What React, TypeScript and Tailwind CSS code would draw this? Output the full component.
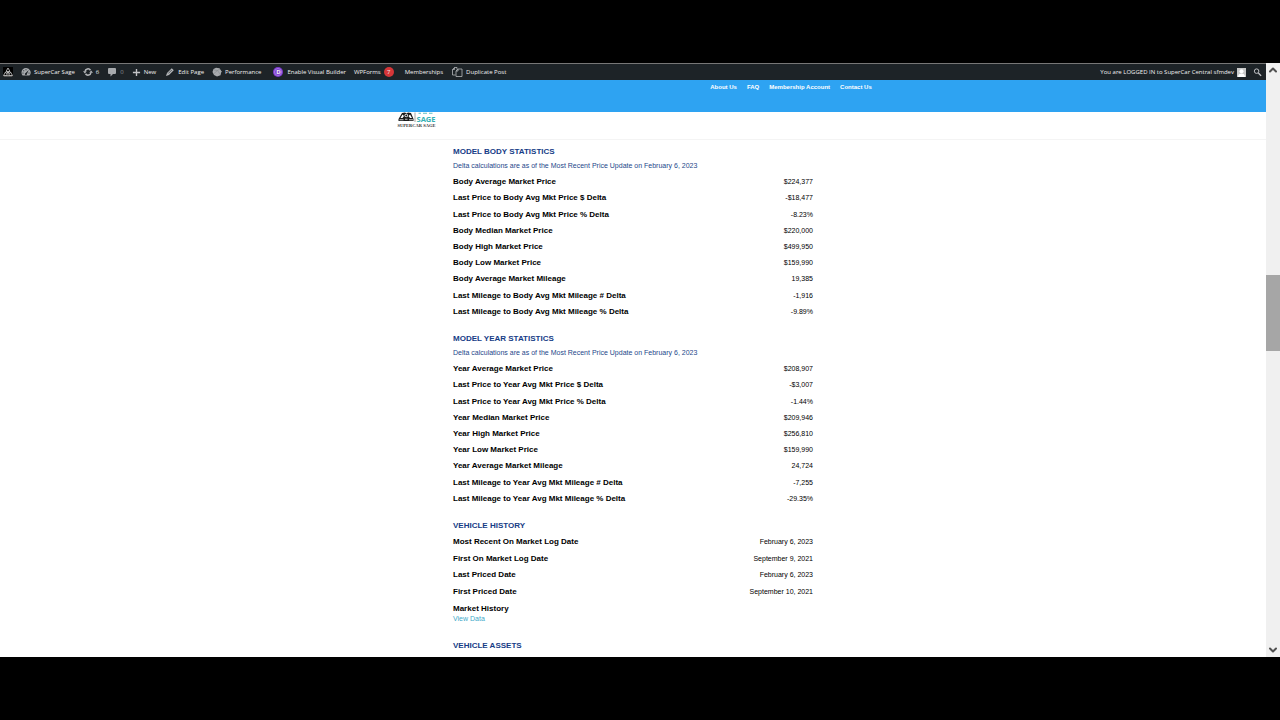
import type { ReactNode } from 'react';
import { ChevronDown, ChevronUp } from 'lucide-react';

interface Row { label: string; value: string }
interface SectionProps { title: string; note?: string; rows: Row[]; height: string }

const bodyRows: Row[] = [
  { label: 'Body Average Market Price', value: '$224,377' },
  { label: 'Last Price to Body Avg Mkt Price $ Delta', value: '-$18,477' },
  { label: 'Last Price to Body Avg Mkt Price % Delta', value: '-8.23%' },
  { label: 'Body Median Market Price', value: '$220,000' },
  { label: 'Body High Market Price', value: '$499,950' },
  { label: 'Body Low Market Price', value: '$159,990' },
  { label: 'Body Average Market Mileage', value: '19,385' },
  { label: 'Last Mileage to Body Avg Mkt Mileage # Delta', value: '-1,916' },
  { label: 'Last Mileage to Body Avg Mkt Mileage % Delta', value: '-9.89%' },
];

const yearRows: Row[] = [
  { label: 'Year Average Market Price', value: '$208,907' },
  { label: 'Last Price to Year Avg Mkt Price $ Delta', value: '-$3,007' },
  { label: 'Last Price to Year Avg Mkt Price % Delta', value: '-1.44%' },
  { label: 'Year Median Market Price', value: '$209,946' },
  { label: 'Year High Market Price', value: '$256,810' },
  { label: 'Year Low Market Price', value: '$159,990' },
  { label: 'Year Average Market Mileage', value: '24,724' },
  { label: 'Last Mileage to Year Avg Mkt Mileage # Delta', value: '-7,255' },
  { label: 'Last Mileage to Year Avg Mkt Mileage % Delta', value: '-29.35%' },
];

const historyRows: Row[] = [
  { label: 'Most Recent On Market Log Date', value: 'February 6, 2023' },
  { label: 'First On Market Log Date', value: 'September 9, 2021' },
  { label: 'Last Priced Date', value: 'February 6, 2023' },
  { label: 'First Priced Date', value: 'September 10, 2021' },
];

const note = 'Delta calculations are as of the Most Recent Price Update on February 6, 2023';

function AdminLink({ icon, children }: { icon?: ReactNode; children?: ReactNode }) {
  return <a href="#" className="flex items-center gap-[3px] whitespace-nowrap">{icon}{children}</a>;
}

function SiteIcon() {
  return <svg viewBox="0 0 20 20" className="size-[10px]">
    <rect width="20" height="20" fill="#000" />
    <path d="M10 2 6 9h8zM5 10l-4 7h8zM15 10l-4 7h8z" fill="none" stroke="#ddd" strokeWidth="1.5" />
    <path d="M7 10h6l-3 5z" fill="#bbb" />
    <path d="M1 18.5h18" stroke="#ddd" />
  </svg>;
}

function DashboardIcon() {
  return <svg viewBox="0 0 20 20" className="size-[10px]">
    <path fill="#a7aaad" d="M10 2a9 9 0 0 0-9 9c0 2.400.8 4.500 2.200 6.200h13.600A9 9 0 0 0 10 2z" />
    <g fill="#1d2327"><circle cx="10" cy="5.500" r="1.200" /><circle cx="5.500" cy="7.500" r="1.200" /><circle cx="4" cy="12" r="1.200" /><circle cx="16" cy="12" r="1.200" /><path d="m15.500 6-3.500 7.500a2.200 2.200 0 1 1-2.800-1.500z" /></g>
  </svg>;
}

function UpdatesIcon() {
  return <svg viewBox="0 0 20 20" className="size-[10px]">
    <path d="M4 9a6 6 0 0 1 11-2.500M16 11a6 6 0 0 1-11 2.500" fill="none" stroke="#b4b6b9" strokeWidth="3" />
    <path d="M0 8.500h7.500L3.700 13zM20 11.500h-7.500L16.300 7z" fill="#b4b6b9" />
  </svg>;
}

function CommentIcon() {
  return <svg viewBox="0 0 20 20" className="size-[10px]"><path fill="#a7aaad" d="M4 2h12a2 2 0 0 1 2 2v8a2 2 0 0 1-2 2h-4l-5 5v-5H4a2 2 0 0 1-2-2V4a2 2 0 0 1 2-2z" /></svg>;
}

function PlusIcon() {
  return <svg viewBox="0 0 20 20" className="size-[9px]"><path fill="#c3c4c7" d="M8.500 2h3v6.500H18v3h-6.500V18h-3v-6.500H2v-3h6.500z" /></svg>;
}

function EditIcon() {
  return <svg viewBox="0 0 20 20" className="size-[10px]">
    <path fill="#b4b6b9" d="m13.500 2.500 4 4-9.500 9.500-6 2 2-6z" />
    <path d="m6.500 13 7-7" stroke="#1d2327" strokeWidth="1.200" />
  </svg>;
}

function PerformanceIcon() {
  return <svg viewBox="0 0 20 20" className="size-[10px]">
    <path fill="#a7aaad" d="M8 1.500 15 2.500l4 6-2 8-7 2.500-6-3-3-6 2-6z" />
    <path d="m4 6 7 1 5-3M4 13l7-6 5 7" fill="none" stroke="#85898d" strokeWidth="1.200" />
  </svg>;
}

function DuplicateIcon() {
  return <svg viewBox="0 0 22 20" className="h-[10px] w-[11px]" fill="none" stroke="#b4b6b9" strokeWidth="1.600">
    <path d="M10 5V1H5L1 5v11h6M5 1v4H1" />
    <path d="M12 4h8v15H8V8zM12 4v4H8" />
  </svg>;
}

function SearchIcon() {
  return <svg viewBox="0 0 20 20" className="size-[9px]" fill="none" stroke="#c3c4c7">
    <circle cx="8" cy="7" r="5" strokeWidth="2.200" /><path d="m12 11 6 6.500" strokeWidth="3" />
  </svg>;
}

function BuilderIcon() {
  return <span className="mr-px flex size-[10px] items-center justify-center rounded-full bg-[#7e3bd0]">
    <span className="flex size-[8px] items-center justify-center rounded-full border border-[#a77be3] font-bold">D</span>
  </span>;
}

function AdminBar() {
  return <nav aria-label="Toolbar" className="flex h-[17px] shrink-0 items-center justify-between border-t border-[#777] bg-[#1d2327] pr-1 pl-[3px] font-['Open_Sans',sans-serif] text-[6px] leading-[10px] text-[#f0f0f1]">
    <div className="flex items-center">
      <a href="#" aria-label="Home"><SiteIcon /></a>
      <div className="ml-2"><AdminLink icon={<DashboardIcon />}>SuperCar Sage</AdminLink></div>
      <div className="ml-2"><AdminLink icon={<UpdatesIcon />}>6</AdminLink></div>
      <div className="ml-2 text-[#8c8f94]"><AdminLink icon={<CommentIcon />}>0</AdminLink></div>
      <div className="ml-2"><AdminLink icon={<PlusIcon />}>New</AdminLink></div>
      <div className="ml-[9px]"><AdminLink icon={<EditIcon />}>Edit Page</AdminLink></div>
      <div className="ml-2"><AdminLink icon={<PerformanceIcon />}>Performance</AdminLink></div>
      <div className="ml-3"><AdminLink icon={<BuilderIcon />}>Enable Visual Builder</AdminLink></div>
      <div className="ml-2"><AdminLink>WPForms<span className="flex size-[10px] items-center justify-center rounded-full bg-[#d63638]">7</span></AdminLink></div>
      <div className="ml-[11px]"><AdminLink>Memberships</AdminLink></div>
      <div className="ml-[9px]"><AdminLink icon={<DuplicateIcon />}>Duplicate Post</AdminLink></div>
    </div>
    <div className="flex items-center gap-[7px]">
      <AdminLink>You are LOGGED IN to SuperCar Central sfmdev
        <svg viewBox="0 0 18 18" className="size-[9px]"><rect width="18" height="18" fill="#c9c9c9" /><circle cx="9" cy="6.500" r="4" fill="#fff" /><path d="M2 18c0-5 3-7 7-7s7 2 7 7z" fill="#fff" /></svg>
      </AdminLink>
      <button aria-label="Search"><SearchIcon /></button>
    </div>
  </nav>;
}

function Logo() {
  return <a href="#" aria-label="Supercar Sage" className="block">
    <svg viewBox="0 0 80 32" className="h-4 w-10">
      <path d="M10 2 16 1l3 2 3-2 6 1 5 12v4H3v-4z" fill="#1a1a1a" />
      <path d="m11 5-4 7h4l3-4zM26 5l4 7h-4l-3-4z" fill="#fff" />
      <circle cx="18.500" cy="7" r="3.500" fill="#fff" /><circle cx="18.500" cy="7" r="2" fill="#111" />
      <path d="M5 15.500h8M16 14.500h5M24 15.500h8" stroke="#fff" strokeWidth="1.500" />
      <path d="M36 1v19" stroke="#888" strokeWidth="1.500" />
      <path d="M43 2.500h5M52 2.500h8M64 2.500h7" stroke="#5cbfc3" strokeWidth="2" />
      <text x="39" y="20" fontFamily="Open Sans, sans-serif" fontSize="15" fontWeight="700" fill="#35b1b5">SAGE</text>
      <text x="1" y="30" fontFamily="Liberation Serif, serif" fontSize="9" fontWeight="700" fill="#333">SUPERCAR SAGE</text>
    </svg>
  </a>;
}

function Title({ children }: { children: ReactNode }) {
  return <h2 className="text-[8px] leading-4 font-bold text-[#163c86]">{children}</h2>;
}

function Section({ title, note, rows, height }: SectionProps) {
  return <section>
    <Title>{title}</Title>
    {note && <p className="mb-[2px] leading-3 text-[#24478a]">{note}</p>}
    <table className={`w-full ${height}`}>
      <tbody>
        {rows.map((row) => <tr key={row.label}>
          <th scope="row" className="p-0 text-left text-[8px] font-bold">{row.label}</th>
          <td className="p-0 text-right">{row.value}</td>
        </tr>)}
      </tbody>
    </table>
  </section>;
}

function Scrollbar() {
  return <div className="flex w-[14px] shrink-0 flex-col bg-[#f0f0f0] text-[#505050]">
    <button aria-label="Scroll up" className="flex h-[14px] items-center justify-center"><ChevronUp size={12} strokeWidth={4} /></button>
    <div className="grow-[198]" />
    <div className="grow-[76] bg-[#a6a6a6]" />
    <div className="grow-[292]" />
    <button aria-label="Scroll down" className="flex h-[14px] items-center justify-center"><ChevronDown size={12} strokeWidth={4} /></button>
  </div>;
}

export default function App() {
  return <div className="flex h-screen bg-black py-[63px] font-['Liberation_Sans',Arial,sans-serif] text-[7px] leading-[10px] text-black">
    <div className="flex min-w-0 flex-1 flex-col overflow-hidden bg-white">
      <AdminBar />
      <header className="shrink-0">
        <nav aria-label="Main" className="flex h-8 justify-center gap-[10px] bg-[#2ea3f2] pt-[2px] pl-[316px] text-[6px] font-bold text-white">
          <a href="#">About Us</a>
          <a href="#">FAQ</a>
          <a href="#">Membership Account</a>
          <a href="#">Contact Us</a>
        </nav>
        <div className="h-7 border-b border-[#f4f4f4]">
          <div className="mx-auto w-[472px]"><Logo /></div>
        </div>
      </header>
      <main className="mx-auto w-[360px] pt-1">
        <div className="space-y-[11px]">
          <Section title="MODEL BODY STATISTICS" note={note} rows={bodyRows} height="h-[146px]" />
          <Section title="MODEL YEAR STATISTICS" note={note} rows={yearRows} height="h-[146px]" />
          <Section title="VEHICLE HISTORY" rows={historyRows} height="h-[66px]" />
        </div>
        <div className="mt-1 mb-[14px]">
          <p className="text-[8px] font-bold">Market History</p>
          <a href="#" className="text-[#3fa9c9]">View Data</a>
        </div>
        <Title>VEHICLE ASSETS</Title>
      </main>
    </div>
    <Scrollbar />
  </div>;
}
